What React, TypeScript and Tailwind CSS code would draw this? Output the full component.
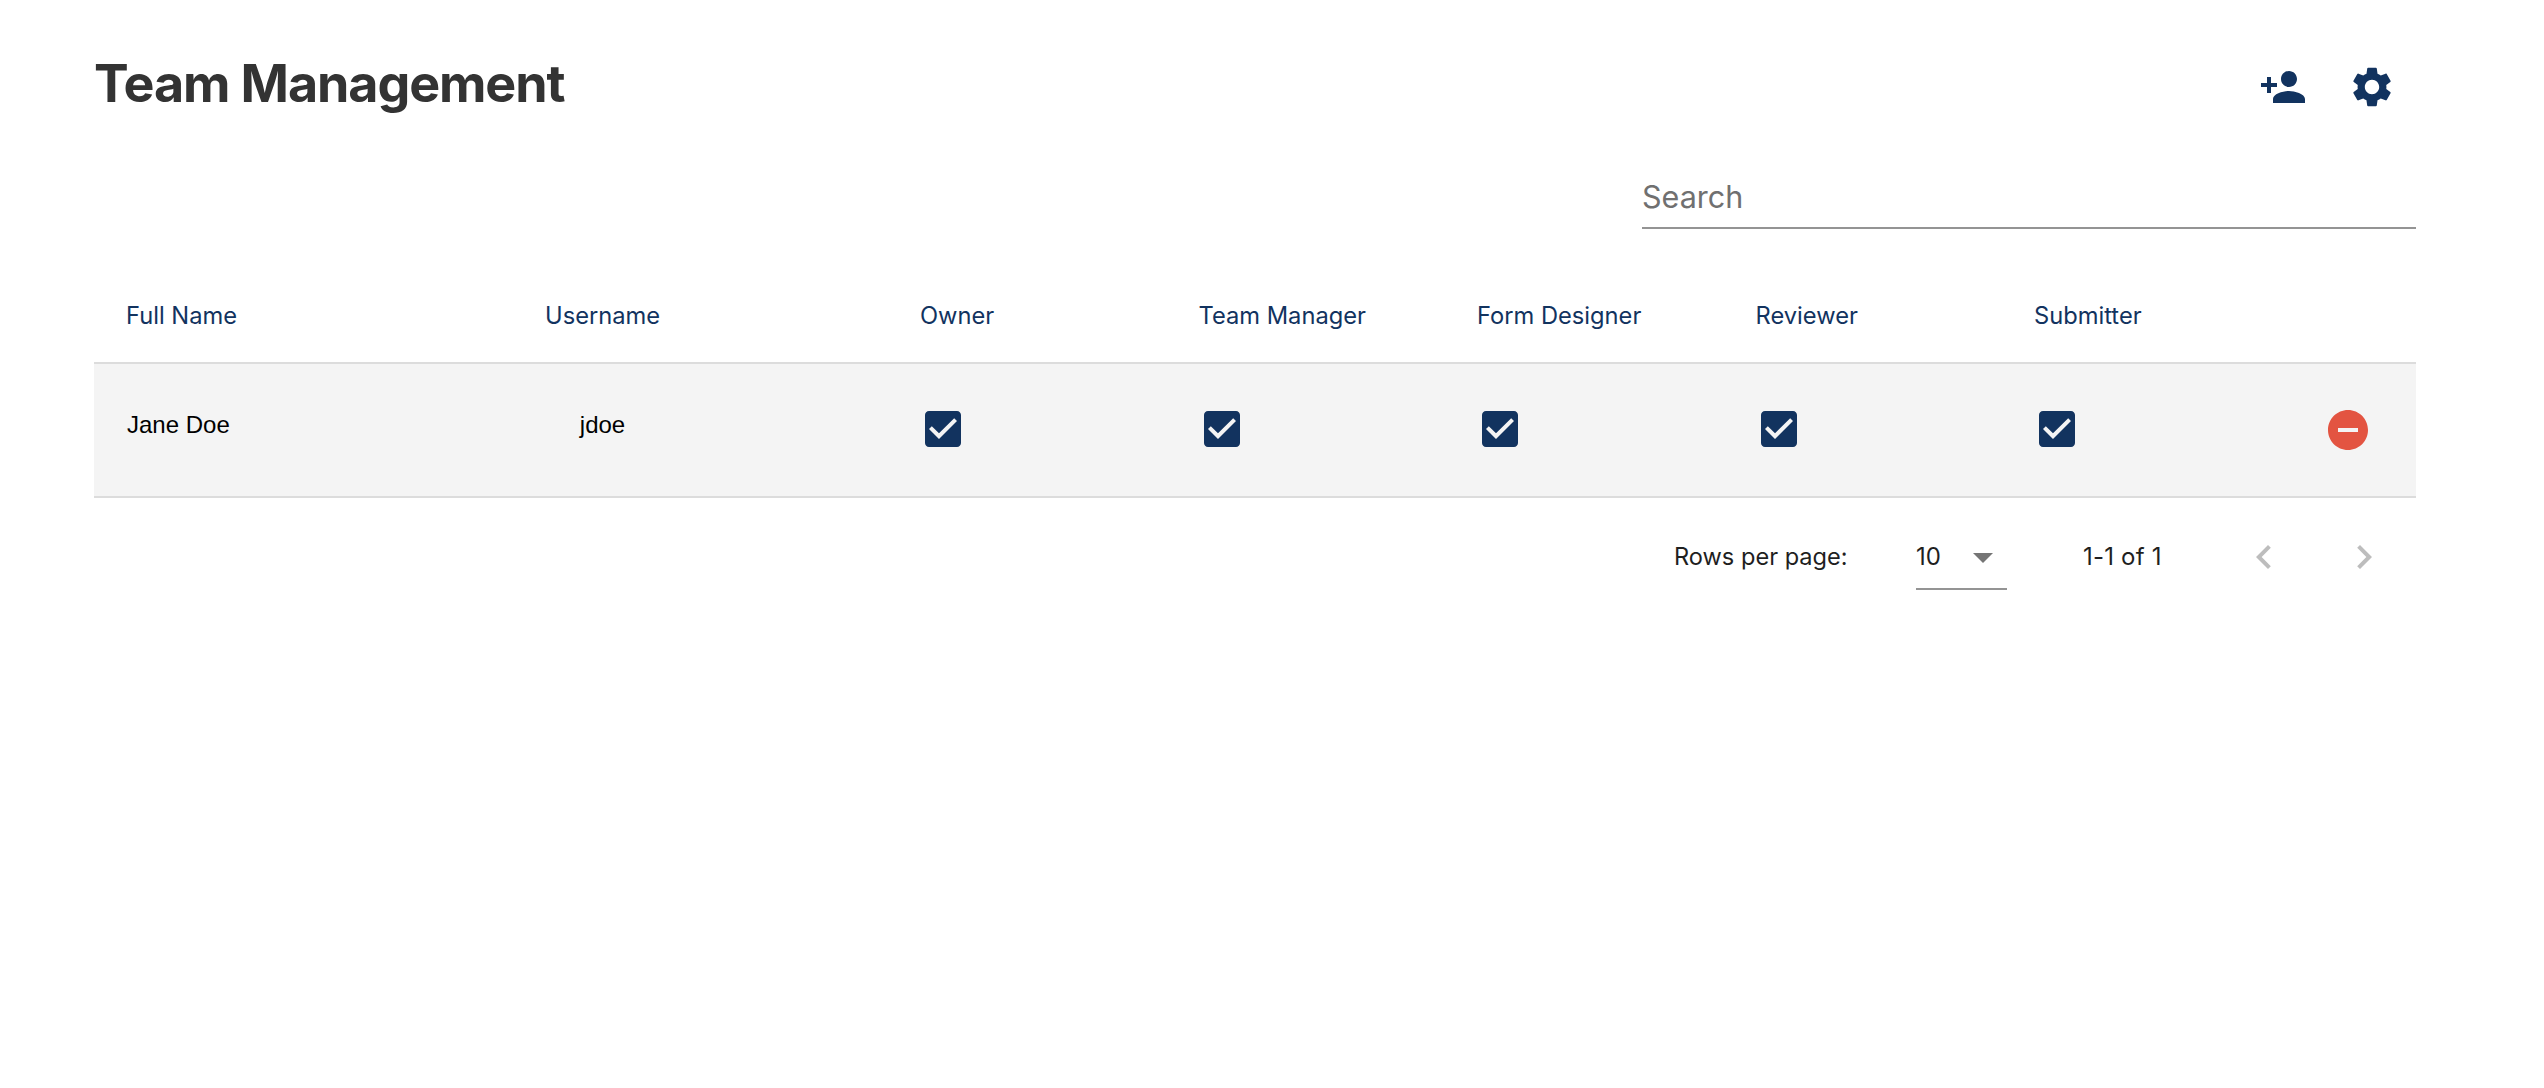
import React from 'react';

const NAVY = 'text-[#12335f]';

const columns = ['Owner', 'Team Manager', 'Form Designer', 'Reviewer', 'Submitter'];

const Icon = ({ d, className }: { d: string; className: string }) => (
  <svg viewBox="0 0 24 24" fill="currentColor" className={className}>
    <path d={d} />
  </svg>
);

const PERSON_ADD =
  'M15 12c2.21 0 4-1.79 4-4s-1.79-4-4-4-4 1.79-4 4 1.79 4 4 4zm-9-2V7H4v3H1v2h3v3h2v-3h3v-2H6zm9 4c-2.67 0-8 1.34-8 4v2h16v-2c0-2.66-5.33-4-8-4z';
const SETTINGS =
  'M19.14 12.94c.04-.3.06-.61.06-.94 0-.32-.02-.64-.07-.94l2.03-1.58c.18-.14.23-.41.12-.61l-1.92-3.32c-.12-.22-.37-.29-.59-.22l-2.39.96c-.5-.38-1.03-.7-1.62-.94l-.36-2.54c-.04-.24-.24-.41-.48-.41h-3.84c-.24 0-.43.17-.47.41l-.36 2.54c-.59.24-1.13.57-1.62.94l-2.39-.96c-.22-.08-.47 0-.59.22L2.74 8.87c-.12.21-.08.47.12.61l2.03 1.58c-.05.3-.09.63-.09.94s.02.64.07.94l-2.03 1.58c-.18.14-.23.41-.12.61l1.92 3.32c.12.22.37.29.59.22l2.39-.96c.5.38 1.03.7 1.62.94l.36 2.54c.05.24.24.41.48.41h3.84c.24 0 .44-.17.47-.41l.36-2.54c.59-.24 1.13-.56 1.62-.94l2.39.96c.22.08.47 0 .59-.22l1.92-3.32c.12-.22.07-.47-.12-.61l-2.01-1.58zM12 15.6c-1.98 0-3.6-1.62-3.6-3.6s1.62-3.6 3.6-3.6 3.6 1.62 3.6 3.6-1.62 3.6-3.6 3.6z';
const CHECKBOX =
  'M19 3H5c-1.11 0-2 .9-2 2v14c0 1.1.89 2 2 2h14c1.11 0 2-.9 2-2V5c0-1.1-.89-2-2-2zm-9 14l-5-5 1.41-1.41L10 14.17l7.59-7.59L19 8l-9 9z';
const REMOVE_CIRCLE =
  'M12 2C6.48 2 2 6.48 2 12s4.48 10 10 10 10-4.48 10-10S17.52 2 12 2zm5 11H7v-2h10v2z';

const gridCols = 'grid grid-cols-[419px_375px_278.5px_278.5px_278.5px_278.5px_278.5px_136px]';

export default function App() {
  return (
    <div className="min-h-[1088px] bg-white pr-[128px] pl-[94px] font-['Inter',sans-serif]">
      {/* Title row */}
      <div className="flex h-[174px] items-start justify-between">
        <h1 className="mt-[54px] text-[52px] leading-[60px] font-bold tracking-[-1.1px] text-[#333333]">
          Team Management
        </h1>
        <div className={`mt-[63px] mr-[20px] flex gap-[41px] ${NAVY}`}>
          <Icon d={PERSON_ADD} className="h-12 w-12" />
          <Icon d={SETTINGS} className="h-12 w-12" />
        </div>
      </div>

      {/* Search */}
      <div className="flex justify-end">
        <div className="h-[55px] w-[774px] border-b-2 border-[#949494] text-[30.5px] leading-[45px] text-[#707070]">
          Search
        </div>
      </div>

      {/* Table */}
      <div className={`${gridCols} mt-[38px] h-[97px] items-center border-b-2 border-[#dcdcdc] pt-[2px] text-[23.7px] ${NAVY}`}>
        <div className="pl-8">Full Name</div>
        <div className="pl-8">Username</div>
        {columns.map((c) => (
          <div key={c} className="pl-8">
            {c}
          </div>
        ))}
        <div />
      </div>
      <div className={`${gridCols} h-[134px] items-center border-b-2 border-[#dcdcdc] bg-[#f4f4f4]`}>
        <div className="mb-[10px] pl-[33px] font-['Liberation_Sans',sans-serif] text-[24px] text-black">Jane Doe</div>
        <div className="mb-[10px] pl-8 font-['Liberation_Sans',sans-serif] text-[24px] text-black">
          <div className="w-[115px] text-center">jdoe</div>
        </div>
        {columns.map((c) => (
          <div key={c} className={`mb-[2px] pl-[31px] ${NAVY}`}>
            <Icon d={CHECKBOX} className="h-12 w-12" />
          </div>
        ))}
        <div className="flex justify-center pr-[2px] text-[#e35441]">
          <Icon d={REMOVE_CIRCLE} className="h-12 w-12" />
        </div>
      </div>

      {/* Pagination */}
      <div className="mt-[13px] flex h-[92px] items-center text-[24px] whitespace-nowrap text-[#1f1f1f]">
        <span className="ml-[1580px] w-[242px] text-[23.6px]">Rows per page:</span>
        <div className="mt-[6px] flex h-[59px] w-[91px] items-center justify-between border-b-2 border-[#949494] pb-[4px]">
          <span>10</span>
          <svg viewBox="0 0 24 24" fill="#757575" className="h-12 w-12">
            <path d="M7 10l5 5 5-5z" />
          </svg>
        </div>
        <span className="ml-[76px] w-[157px] tracking-[0.2px]">1-1 of 1</span>
        <svg viewBox="0 0 24 24" fill="#bdbdbd" className="h-12 w-12">
          <path d="M15.41 7.41L14 6l-6 6 6 6 1.41-1.41L10.83 12z" />
        </svg>
        <svg viewBox="0 0 24 24" fill="#bdbdbd" className="ml-[52px] h-12 w-12">
          <path d="M10 6L8.59 7.41 13.17 12l-4.58 4.59L10 18l6-6z" />
        </svg>
      </div>
    </div>
  );
}
